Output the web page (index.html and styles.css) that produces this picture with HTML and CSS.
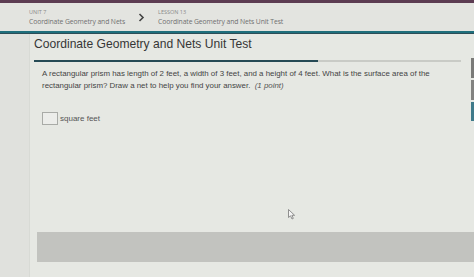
FILE: index.html
```html
<!DOCTYPE html>
<html>
<head>
<meta charset="utf-8">
<link rel="stylesheet" href="styles.css">
</head>
<body>
<div class="page">
  <div class="topband"></div>
  <div class="crumbs">
    <div class="crumb">
      <div class="crumb-label">UNIT 7</div>
      <div class="crumb-title">Coordinate Geometry and Nets</div>
    </div>
    <div class="chev">
      <svg width="7" height="9" viewBox="0 0 7 9"><path d="M1.5 1 L5 4.5 L1.5 8" fill="none" stroke="#444" stroke-width="1.6"/></svg>
    </div>
    <div class="crumb">
      <div class="crumb-label">LESSON 13</div>
      <div class="crumb-title">Coordinate Geometry and Nets Unit Test</div>
    </div>
  </div>
  <div class="rule"></div>
  <div class="main">
    <div class="gutter"></div>
    <div class="content">
      <h1 class="title">Coordinate Geometry and Nets Unit Test</h1>
      <div class="progress"><div class="progress-fill"></div></div>
      <div class="question">
        <p class="qtext">A rectangular prism has length of 2 feet, a width of 3 feet, and a height of 4 feet. What is the surface area of the rectangular prism? Draw a net to help you find your answer.&nbsp; <em>(1 point)</em></p>
        <div class="answer">
          <span class="box"></span>
          <span class="unit">square feet</span>
        </div>
      </div>
      <div class="spacer"></div>
      <div class="footer-bar"></div>
    </div>
  </div>
  <div class="edge">
    <div class="edge-a"></div>
    <div class="edge-b"></div>
    <div class="edge-c"></div>
  </div>
  <svg class="cursor" width="8" height="11" viewBox="0 0 8 11"><path d="M0.5 0.5 L0.5 8.5 L2.5 6.8 L4 10 L5.3 9.4 L3.9 6.3 L6.6 6.3 Z" fill="#f4f4f4" stroke="#777" stroke-width="0.8"/></svg>
</div>
</body>
</html>
```
FILE: styles.css
```css
html, body {
  margin: 0;
  padding: 0;
}
body {
  background: #e4e6e1;
  font-family: "Liberation Sans", Arial, sans-serif;
}
.page {
  position: relative;
  width: 474px;
  height: 277px;
  overflow: hidden;
  display: flex;
  flex-direction: column;
}
.topband {
  height: 3px;
  background: #5c3c52;
  flex: none;
}
.crumbs {
  height: 28px;
  flex: none;
  background: #e3e4e0;
  display: flex;
  align-items: center;
  padding-left: 29px;
  gap: 13px;
  font-family: "Open Sans", sans-serif;
  color: #777;
}
.crumb {
  display: flex;
  flex-direction: column;
  gap: 1px;
}
.crumb-label {
  font-size: 5.5px;
  line-height: 7px;
  color: #8a8a8a;
}
.crumb-title {
  font-size: 6.8px;
  line-height: 9px;
  color: #707070;
  letter-spacing: -0.1px;
}
.chev {
  display: flex;
  align-items: center;
  padding-top: 1px;
}
.rule {
  height: 3px;
  flex: none;
  background: #1f6f7c;
  border-bottom: 1px solid #2c4e58;
  box-sizing: border-box;
}
.main {
  flex: 1;
  display: flex;
}
.gutter {
  width: 30px;
  flex: none;
  background: #e0e1dd;
  border-right: 1px solid #d8dad5;
  box-sizing: border-box;
}
.content {
  flex: 1;
  display: flex;
  flex-direction: column;
  padding-left: 4px;
  background: #e6e8e3;
}
.title {
  margin: 3px 0 0 0;
  font-size: 12.1px;
  line-height: 15px;
  font-weight: normal;
  color: #363636;
}
.progress {
  margin-top: 8px;
  width: 427px;
  height: 2px;
  background: #c9cbc6;
}
.progress-fill {
  width: 284px;
  height: 2px;
  background: #264a55;
}
.question {
  padding-left: 8px;
  padding-right: 20px;
}
.qtext {
  margin: 6px 0 0 0;
  font-size: 7.9px;
  line-height: 12px;
  color: #444;
}
.qtext em {
  color: #555;
}
.answer {
  margin-top: 20px;
  display: flex;
  align-items: center;
  gap: 2px;
}
.box {
  width: 14px;
  height: 11px;
  border: 1px solid #a9aba7;
  background: #ecedea;
}
.unit {
  font-size: 8px;
  color: #555;
}
.spacer {
  flex: 1;
}
.footer-bar {
  margin-left: 3px;
  height: 30px;
  background: #c2c3bf;
  margin-bottom: 15px;
}
.edge {
  position: absolute;
  right: 0;
  top: 58px;
  width: 3px;
  display: flex;
  flex-direction: column;
}
.edge-a { height: 20px; background: #7a7a78; margin-bottom: 2px; }
.edge-b { height: 20px; background: #828280; margin-bottom: 2px; }
.edge-c { height: 19px; background: #3f7a8a; }
.cursor {
  position: absolute;
  left: 288px;
  top: 209px;
}
```
